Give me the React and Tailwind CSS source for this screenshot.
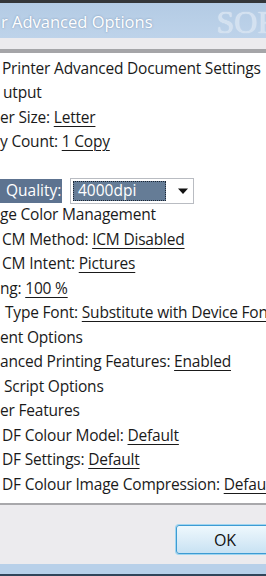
import React from 'react';

const rows = [
  { pre: 'Printer Advanced Document Settings', pl: 'pl-[2px]' },
  { pre: 'utput', pl: 'pl-[3px]' },
  { pre: 'er Size: ', val: 'Letter', pl: 'pl-0' },
  { pre: 'y Count: ', val: '1 Copy', pl: 'pl-0' },
  { blank: true },
  { quality: true },
  { pre: 'ge Color Management', pl: 'pl-0' },
  { pre: 'CM Method: ', val: 'ICM Disabled', pl: 'pl-[2px]' },
  { pre: 'CM Intent: ', val: 'Pictures', pl: 'pl-[2px]' },
  { pre: 'ng: ', val: '100 %', pl: 'pl-0' },
  { pre: 'Type Font: ', val: 'Substitute with Device Font', pl: 'pl-[5px]' },
  { pre: 'ent Options', pl: 'pl-0' },
  { pre: 'anced Printing Features: ', val: 'Enabled', pl: 'pl-0' },
  { pre: 'Script Options', pl: 'pl-[4px]' },
  { pre: 'er Features', pl: 'pl-0' },
  { pre: 'DF Colour Model: ', val: 'Default', pl: 'pl-[2px]' },
  { pre: 'DF Settings: ', val: 'Default', pl: 'pl-[2px]' },
  { pre: 'DF Colour Image Compression: ', val: 'Default', pl: 'pl-[2px]' },
];

function Row({ r }) {
  if (r.blank) return <div className="h-[24.47px]" />;
  if (r.quality) {
    return (
      <div className="h-[24.47px] flex items-center">
        <div className="h-[24px] w-[62px] bg-[#5d7390] text-white flex items-center pl-[6px]">Quality:</div>
        <div className="ml-[8px] h-[26px] w-[124px] bg-white border border-[#b9bcc2] flex items-center p-[2px]">
          <div className="h-full w-[93px] bg-[#657c96] border border-dotted border-[#1c2633] text-white flex items-center pl-[4px]">4000dpi</div>
          <svg width="12" height="8" viewBox="0 0 12 8" className="ml-[11px]">
            <path d="M1 1.5 L11 1.5 L6 7 Z" fill="#111" />
          </svg>
        </div>
      </div>
    );
  }
  return (
    <div className={`h-[24.47px] flex items-center whitespace-pre overflow-hidden tracking-[-0.2px] ${r.pl}`}>
      <span>
        {r.pre}
        {r.val && <span className="underline underline-offset-[3px] decoration-1">{r.val}</span>}
      </span>
    </div>
  );
}

export default function App() {
  return (
    <div className="w-[266px] h-[576px] overflow-hidden bg-[#ecebee] text-[#1a1a1a] text-[15.5px] flex flex-col" style={{ fontFamily: '"Open Sans", "Noto Sans", sans-serif' }}>
      <div className="h-[3px] bg-[#333639] shrink-0" />
      <div className="h-[35px] shrink-0 bg-gradient-to-b from-[#b3cbe4] to-[#bed3ea] flex items-center overflow-hidden">
        <span className="text-white text-[16.5px] pl-[1px] pt-[3px] whitespace-nowrap [text-shadow:0_0_2px_rgba(60,90,130,0.5)]">r Advanced Options</span>
        <span className="ml-[64px] shrink-0 text-[#d3e1f0] text-[32px] leading-none pt-[2px] whitespace-nowrap [text-shadow:0_0_1px_#eef4fa]" style={{ fontFamily: '"Liberation Serif", serif' }}>SOF</span>
      </div>
      <div className="h-[11px] shrink-0" />
      <div className="h-[4px] shrink-0 border-t-2 border-b-2 border-[#a5a5a8] bg-[#e5e5e7]" />
      <div className="h-[450px] shrink-0 bg-white pt-[3px] overflow-hidden">
        {rows.map((r, i) => (
          <Row key={i} r={r} />
        ))}
      </div>
      <div className="h-[2px] shrink-0 bg-[#a8a8ab]" />
      <div className="flex-1 flex items-start justify-end pt-[20px]">
        <div className="w-[98px] h-[29px] mr-[-8px] shrink-0 rounded-[3px] border border-[#3d9bd3] bg-gradient-to-b from-[#eef8fd] via-[#dcedf8] to-[#c8e2f3] shadow-[0_0_0_1px_#9fd5f0] flex items-center justify-center text-[16px] text-[#111]">OK</div>
      </div>
      <div className="h-[12px] shrink-0 bg-[#b8d0e9] border-b-[2px] border-[#30455a]" />
    </div>
  );
}
